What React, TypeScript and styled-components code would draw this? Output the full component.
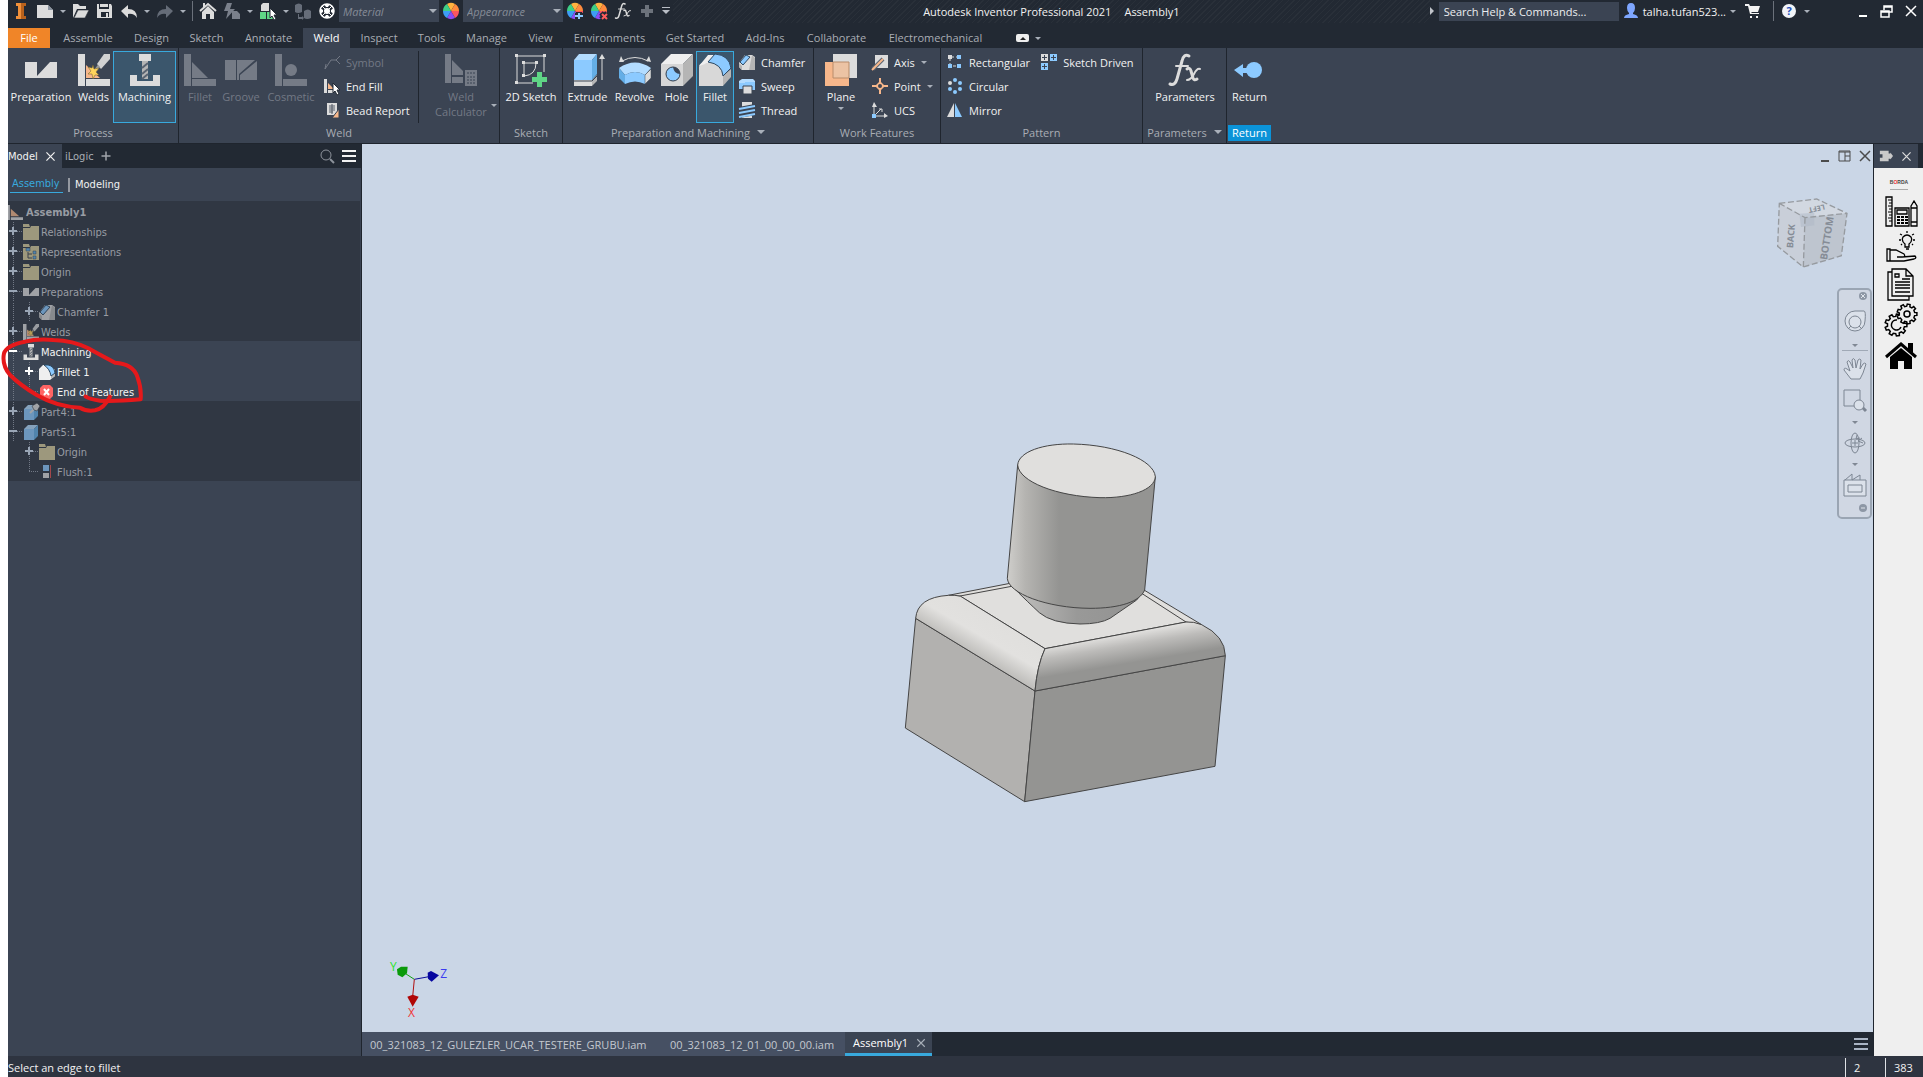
import React from 'react';
import styled, { createGlobalStyle, css } from 'styled-components';

const ui = '"Open Sans", "Noto Sans", sans-serif';
const tahoma = '"DejaVu Sans Condensed", "DejaVu Sans", sans-serif';
const c = {
  dark: '#222933', panel: '#3b4453', tree: '#303743', line: '#1f252e', text: '#f2f2f2',
  muted: '#a9adb4', off: '#737985', accent: '#38a9dd', L: '#dcdcdc', D: '#b5b5b5',
  B: '#8ccaff', B2: '#64aee6', B3: '#b3dcff', O: '#f7b78b', G: '#5fd586', view: '#cad6e6',
};

const Global = createGlobalStyle`
  *{box-sizing:border-box}
  body{margin:0;background:#fff;font:11px ${ui};color:${c.text}}
  button{font:inherit;color:inherit;background:none;border:0;padding:0;margin:0}
  button,a{cursor:pointer}
  ul{margin:0;padding:0;list-style:none}
  svg{display:block;flex:none}
`;

/* ---------- glyphs ---------- */
const folder = <path fill="#d8cc9c" d="M0 0h6l1 3H0z M0 4h7l1-2h8v14H0z" />;
const chamfer = (
  <>
    <path fill={c.L} d="M0 9l6-8h7l3 2v13H3L0 13z" />
    <path fill={c.D} d="M0 9l3 3v4L0 13z M13 1l3 3v12h-6z" />
    <path fill={c.B} stroke="#2f4a63" d="M1 8l6-7 4 2-7 8z" />
  </>
);
const fillet16 = (
  <>
    <path fill="#efefef" d="M0 15V5l4-4h6l6 5v6l-5 4H0z" />
    <path fill={c.D} d="M12 9l4-4v7l-4 3z" />
    <path fill={c.B} stroke="#2f4a63" d="M5 1h4q6 1 7 8l-4 3Q11 5 5 1z" />
  </>
);
const wheel = (
  <>
    <path fill="#ffb23f" d="M8 8L4 1a8 8 0 0 1 8 0z" />
    <path fill="#ff8b3d" d="M8 8l4-7a8 8 0 0 1 4 7z" />
    <path fill="#fb5660" d="M8 8h8a8 8 0 0 1-4 7z" />
    <path fill="#8a4cf5" d="M8 8l4 7a8 8 0 0 1-8 0z" />
    <path fill="#3d9df5" d="M8 8l-4 7a8 8 0 0 1-4-7z" />
    <path fill="#3ecf86" d="M8 8H0a8 8 0 0 1 4-7z" />
  </>
);
const fx = (
  <g fill="none" stroke={c.L} strokeLinecap="round">
    <path strokeWidth="3" d="M20 2q-5-3-7 5L8 25q-2 7-7 5" />
    <path strokeWidth="2" d="M7 12h12" />
    <path strokeWidth="3" d="M18 15q3-2 4 2l2 7q1 3 4 1" />
    <path strokeWidth="2" d="M31 15q-3-1-6 5t-7 6" />
  </g>
);
const drill = (
  <>
    <path fill={c.L} d="M10 0h12v7H10z M1 21h7v6h16v-6h7v11H1z" />
    <path fill={c.D} d="M13 7h6v18h-6z" />
    <path stroke="#5a6472" strokeWidth="2" d="M13 14l6-5M13 20l6-5M13 25l6-5" />
  </>
);
const welds = (
  <>
    <path fill={c.L} d="M0 0h7v32H0z M8 25h24v7H8z" />
    <path fill={c.O} d="M8 11v13h14z" />
    <path fill="#d2d2d2" d="M26 0h6v5L23 15l-4-5z" />
    <path stroke="#9a9a9a" strokeWidth="3" d="M21 12l-4 5" />
    <path fill="#ffd45c" stroke="#6a5a30" strokeWidth=".5" d="M15 11l1 4 5-1-3 4 3 3-4 0-2 4-1-5-4 0 3-3-3-4 4 1z" />
  </>
);
const prep = <path fill={c.L} d="M0 8h12v14L25 8h7v16H0z" />;
const cubeSmall = (
  <>
    <path fill={c.B} d="M1 5h10v11H1z" />
    <path fill={c.B3} d="M1 5l4-4h10l-4 4z" />
    <path fill={c.B2} d="M11 5l4-4v11l-4 4z" />
  </>
);
const arrowCursor = <path fill="#fff" stroke={c.dark} strokeWidth="1" d="M9 5v10l2-2 2 4 2-1-2-4h3z" />;

const big: Record<string, React.ReactNode> = {
  prep, welds, drill, fx,
  filletWeld: <path d="M0 0h7v32H0z M8 25h24v7H8z M8 8v16h16z" />,
  groove: <><path d="M0 6h11v20H0z M12 6h18L14 20v6h-2z M32 7v19H15v-5z" /></>,
  cosmetic: <><path d="M0 0h7v32H0z M8 25h24v7H8z" /><circle cx="16" cy="16" r="6" /></>,
  calc: <><path d="M0 0h6v29H0z M7 23h11v6H7z M7 6v15h11v-4z" /><path d="M20 16h12v16H20z" /><path stroke={c.panel} strokeWidth="1" strokeDasharray="2 1" d="M22 19h8M22 23h8M22 26h8M22 29h8" /></>,
  sketch: (
    <>
      <g fill="none" stroke={c.L}><path d="M2 2h27v16M2 2v27h16M9 9h12M9 9v12M21 9q0 12-12 13" /></g>
      <path fill={c.L} d="M0 0h3v3H0z M28 0h3v3h-3z M0 27h3v3H0z M7 7h3v3H7z M20 7h3v3h-3z M7 20h3v3H7z" />
      <path fill={c.G} d="M22 18h5v5h5v5h-5v5h-5v-5h-5v-5h5z" />
    </>
  ),
  extrude: (
    <>
      <path fill={c.L} d="M2 26h18v6H2z" /><path fill={c.D} d="M20 26l5-5v6l-5 5z" />
      <path fill={c.B} d="M2 6h18v20H2z" /><path fill={c.B3} d="M2 6l5-6h18l-5 6z" /><path fill={c.B2} d="M20 6l5-6v20l-5 6z" />
      <path stroke={c.panel} d="M2 27h18l5-5" fill="none" />
      <path stroke={c.L} d="M30 4v22" /><path fill={c.L} d="M27 5l3-5 3 5z" />
    </>
  ),
  revolve: (
    <>
      <path fill="none" stroke={c.L} d="M3 7Q16 0 29 7" /><path fill={c.L} d="M0 8l2-6 3 6z M32 8l-2-6-3 5z" />
      <path fill={c.B3} d="M0 14Q16 3 32 14l-6 7Q16 15 6 21z" />
      <path fill={c.B2} d="M0 14l6 7v9l-6-6z" />
      <path fill={c.B} d="M6 21Q16 15 26 21v9q-10-5-20 0z" />
      <path fill={c.L} stroke={c.panel} strokeWidth=".5" d="M26 21l6-6v9l-6 6z" />
    </>
  ),
  hole: (
    <>
      <path fill="#d6d6d6" d="M0 10h22v22H0z" /><path fill="#efefef" d="M0 10L10 0h22L22 10z" /><path fill={c.D} d="M22 10L32 0v22L22 32z" />
      <circle cx="12" cy="20" r="7" fill={c.B} stroke="#333c4a" /><path fill={c.panel} d="M12 13a7 7 0 0 1 7 7q-6 0-7-7z" />
    </>
  ),
  fillet: (
    <>
      <path fill="#d8d8d8" d="M0 32V13Q0 8 9 8q13 1 15 13v11z" /><path fill="#efefef" d="M0 12L9 1h6L6 10z M9 1h8L9 9H3z" />
      <path fill={c.D} d="M24 22l8-7v8l-8 9z" />
      <path fill={c.B} stroke="#2f4a63" d="M9 8l7-8q14 1 16 14l-8 8Q23 10 9 8z" />
    </>
  ),
  plane: (
    <>
      <path fill={c.L} d="M8 0h24v24H8z" /><path fill={c.O} d="M0 8h24v24H0z" /><path fill="#ecc3a4" stroke="#b98c6b" d="M8 8h16v16H8z" />
    </>
  ),
  ret: <><circle cx="20" cy="16" r="8" fill={c.B} /><path fill={c.B} d="M0 16l9-6v4h5v5H9v4z" /></>,
};

const small: Record<string, React.ReactNode> = {
  chamfer, folder, fillet: fillet16, wheel, cube: cubeSmall,
  logo: <><path fill="#f0903a" d="M3 0h10v3h-2v10h2v3H3v-3h2V3H3z" /><path fill="#b9621c" d="M8 0h5v3h-2v10h2v3H8z" /></>,
  doc: <><path fill={c.L} d="M0 2h11l5 5v8H0z" /><path fill="#8a93a0" d="M11 2l5 5h-5z" /></>,
  open: <><path fill={c.L} d="M0 15V1h5l2 2h6v3H4z" /><path fill={c.L} stroke={c.dark} strokeWidth=".6" d="M5 7h11l-4 8H1z" /></>,
  save: <><path fill={c.L} d="M0 1h2v5h10V1h2l1 2v12H0z" /><path fill={c.L} d="M3 1h8v3H3z" /><path fill={c.dark} d="M4 9h8v5H4z" /><path fill={c.L} d="M9 10h2v4H9z" /></>,
  undo: <path fill={c.L} d="M0 8l7-6v4q9 0 9 9-3-5-9-4v4z" />,
  redo: <path fill="#656c78" d="M16 8L9 2v4q-9 0-9 9 3-5 9-4v4z" />,
  home: <><path fill={c.L} d="M2 9l6-6 6 6v7h-4v-5H6v5H2z" /><path fill="none" stroke={c.L} strokeWidth="2" d="M0 8l8-7 8 7" /><path fill={c.L} d="M3 0h2v4H3z" /></>,
  bolt: <path fill="#7a808b" d="M3 0h5L6 6h5l-9 10 2-8H0z M8 8h5l3 3v5H8z" />,
  asm: <><path fill={c.L} d="M1 2l2-2h6v8H1z" /><path fill={c.G} d="M0 9h6v7H0z M7 9h6v7H7z" /><g transform="translate(1 0)">{arrowCursor}</g></>,
  parts: <path fill="#666d79" d="M0 2q4-3 7 0v7q-4 2-7 0z M9 8q4-3 7 0v7q-4 2-7 0z M3 11h1v3h3v-1l2 2-2 2v-1H3z" />,
  globe: <><circle cx="8" cy="8" r="7" fill={c.dark} stroke="#fff" strokeWidth="1.500" /><g fill="#fff"><circle cx="8" cy="8" r="3" /><path d="M5 1h6L9 4H7z M5 15h6l-2-3H7z M1 5v6l3-2V7z M15 5v6l-3-2V7z" /></g><path fill="none" stroke="#fff" d="M3 3l4 4M13 3L9 7M3 13l4-4M13 13L9 9" /></>,
  wheelAdd: <>{wheel}<path stroke={c.dark} strokeWidth="6" d="M12 9v7M8 13h8" /><path stroke={c.B} strokeWidth="2" d="M12 10v6M8 13h8" /></>,
  wheelDel: <>{wheel}<path stroke={c.dark} strokeWidth="5" d="M10 10l6 6M16 10l-6 6" /><path stroke="#ff5d5d" strokeWidth="2" d="M11 11l5 5M16 11l-5 5" /></>,
  plus: <path fill="#6c727b" d="M6 2h4v4h4v4h-4v4H6v-4H2V6h4z" />,
  symbol: <path fill="none" stroke={c.off} strokeWidth="1" d="M1 15l1-5M1 15l6-9h5l4-4M12 6l4 4" />,
  endFill: <><path fill={c.L} d="M0 1h3v14H0z M4 12h5v3H4z" /><path fill={c.O} d="M4 5v6h6z" />{arrowCursor}</>,
  bead: <><path fill={c.L} d="M3 1h10v12H3z" /><path stroke="#555d69" d="M5 4h6M5 6h6M5 8h6M5 10h4M8 2v10" /><path fill={c.O} stroke={c.panel} d="M8 16h7V7z" /></>,
  sweep: <><path fill={c.B3} d="M0 3l3-2h11l2 2v3H0z" /><path fill={c.B} d="M0 5h6v6H0z M6 4h10v8h-3V8H6z" /><path fill={c.L} stroke={c.panel} d="M4 8h9v8H4z" /></>,
  thread: <><path fill={c.L} d="M3 0h10v16H3z" /><path stroke={c.panel} strokeWidth="4" d="M0 7l16-3M0 11l16-3M0 14l16-3" /><path stroke={c.B} strokeWidth="2" d="M0 7l16-3M0 11l16-3M0 15l16-3" /></>,
  axis: <><path fill={c.L} d="M3 1h13v13H3z" /><path stroke="#5a6472" strokeWidth="4" d="M1 15L11 5" /><path stroke={c.O} strokeWidth="2" d="M0 16L11 5" /></>,
  point: <><path fill={c.O} d="M7 0h2v16H7z M0 7h16v2H0z M8 3l5 5-5 5-5-5z" /><circle cx="8" cy="8" r="2" fill={c.panel} /></>,
  ucs: <><path fill="none" stroke={c.L} d="M2 14V3M2 14h12M2 14l7-7M7 7h3v3" /><path fill={c.L} d="M0 5l2-5 3 5z M12 11l4 3-4 2z" /><path fill={c.B} d="M0 12h4v4H0z" /></>,
  rect: <><path fill="none" stroke={c.L} strokeDasharray="3 2" d="M3 4v9M4 3h9" /><path fill={c.L} d="M1 1h4v4H1z" /><path fill={c.B} d="M10 1h4v4h-4z M1 10h4v4H1z M10 10h4v4h-4z" /><path stroke={c.L} d="M6 12h3" /></>,
  circ: <><circle cx="3" cy="5" r="2" fill={c.L} />{[[8, 2], [13, 5], [13, 11], [8, 14], [3, 11]].map(([x, y]) => <circle key={`${x}-${y}`} cx={x} cy={y} r="2" fill={c.B} />)}</>,
  mirror: <><path fill={c.L} d="M7 1v14H0z" /><path fill={c.B} d="M8 1v14h7z" /></>,
  driven: <><path fill={c.L} d="M0 0h7v7H0z" /><path fill={c.B} d="M9 0h7v7H9z M0 9h7v7H0z" /><path stroke={c.panel} d="M1 3.500h5M3.500 1v5M10 3.500h5M12.500 1v5M1 12.500h5M3.500 10v5" /></>,
  weldment: <><path fill={c.L} d="M0 0h2v16H0z M3 13h13v3H3z" /><path fill={c.O} d="M3 4v8h9z" /></>,
  reps: <>{folder}<path fill={c.B2} stroke="#3b4453" strokeWidth=".5" d="M3 4h4v3H3z M10 7h3v3h-3z M10 12h3v3h-3z" /><path fill="none" stroke="#3b4453" d="M5 8v6h4M5 10h4" /></>,
  cubePin: <>{cubeSmall}<path stroke={c.L} strokeWidth="2" d="M7 9l4-4" /><path fill={c.L} stroke={c.tree} strokeWidth=".6" d="M9 2l5-3 3 3-3 5-3-1z" /></>,
  end: <><path fill="#ff6464" d="M4 1h7l3 3v8l-3 3H4l-3-3V4z" /><path stroke="#fff" strokeWidth="2" d="M5 5l5 6M10 5l-5 6" /></>,
  flush: <><path fill={c.B} d="M4 1h6v6H4z" /><path fill={c.L} d="M4 9h6v5H4z" /><path stroke="#e05050" d="M11.500 1v13" /></>,
  user: <path fill="#7ea6ff" d="M8 0q4 0 4 5 0 3-2 5v1q5 1 5 4H1q0-3 5-4v-1Q4 8 4 5q0-5 4-5z" />,
  cart: <><path fill="#f2f2f2" d="M0 1h4l1 2h10l-2 6H6l1 1h7v1H5L3 3H0z" /><path fill="#f2f2f2" d="M5 13h2v2H5z M11 13h2v2h-2z" /></>,
  search: <><circle cx="7" cy="7" r="5" fill="none" stroke="#8d929b" strokeWidth="1" /><path stroke="#8d929b" strokeWidth="2" d="M11 11l4 4" /></>,
  menu: <path stroke="currentColor" strokeWidth="2" d="M1 3h14M1 8h14M1 13h14" />,
  min: <path stroke="currentColor" strokeWidth="2" d="M4 13h8" />,
  restore: <path fill="none" stroke="currentColor" strokeWidth="1.500" d="M2 8h8v6H2z M2 9h8M5 7V3h8v6h-3M5 4h8" />,
  tile: <path fill="none" stroke="currentColor" d="M2 3h11v10H2z M2 4h11M8 4v9M8 8h5" />,
  close: <path stroke="currentColor" strokeWidth="1.500" d="M3 3l10 10M13 3L3 13" />,
  add: <path stroke="#a0a4ab" strokeWidth="2" d="M8 2v12M2 8h12" />,
  addin: <path fill="#c9c9c9" d="M1 2h10v3h2v-1l3 4-3 4v-1h-2v3H1v-4h3V6H1z" />,
};

const Svg = styled.svg<{ $s: number }>`width:${p => p.$s}px;height:${p => p.$s}px;overflow:visible`;
const Icon = ({ n, s = 16 }: { n: string; s?: number }) => {
  const large = s === 32 || !small[n];
  return <Svg $s={s} viewBox={large ? '0 0 32 32' : '0 0 16 16'} aria-hidden>{large ? big[n] : small[n]}</Svg>;
};
const Caret = styled.i<{ $w?: number }>`
  display:block;flex:none;width:0;height:0;border:solid transparent;border-top-color:#a9b0ba;
  border-width:${p => p.$w ?? 3}px ${p => p.$w ?? 3}px 0;
`;

/* ---------- frame ---------- */
const Shell = styled.div`
  position:relative;display:grid;grid-template-rows:28px 20px 96px minmax(0,1fr) 21px;
  height:100vh;padding-left:8px;overflow:hidden;background:#fff;
`;
const TitleBar = styled.header`display:flex;background:${c.dark};padding-bottom:6px;min-width:0`;
const Tools = styled.div`display:flex;align-items:center;flex:none`;
const Tool = styled.button<{ $w?: number }>`display:flex;align-items:center;justify-content:center;width:${p => p.$w ?? 24}px;height:22px;flex:none`;
const WindowTools = styled(Tools)`padding-left:38px;color:#fff`;
const Rule = styled.span`width:1px;height:20px;margin:0 3px;background:#6b717b;flex:none`;
const Combo = styled.label`display:flex;align-items:center;width:100px;height:22px;padding-right:2px;background:${c.panel}`;
const Select = styled.select`
  appearance:none;flex:1;min-width:0;height:22px;border:0;padding:0 4px;background:transparent;
  color:#858b96;font:italic 11px ${ui};outline:0;
`;
const Caption = styled.h1`
  display:flex;align-items:center;justify-content:center;gap:13px;flex:1;margin:0;height:23px;font-size:11px;font-weight:400;white-space:nowrap;
  background:repeating-linear-gradient(135deg,transparent 0 3px,rgba(255,255,255,.03) 3px 4px);
`;
const Search = styled.input`
  width:180px;height:19px;border:0;padding:0 5px;background:${c.panel};color:#fff;font:11px ${ui};outline:0;
  &::placeholder{color:#eceef0;opacity:1}
`;
const User = styled.button`display:flex;align-items:center;gap:4px;height:22px;padding-left:4px`;
const Help = styled.span`
  display:grid;place-items:center;width:14px;height:14px;border-radius:50%;background:#f2f4f8;color:#2450b8;font-weight:700;font-size:11px;line-height:14px;
`;
const Right = styled.i`width:0;height:0;border:4px solid transparent;border-left-color:#c0c4ca;border-right-width:0;margin-right:5px`;

const TabBar = styled.nav`display:flex;background:${c.dark};min-width:0;line-height:16px`;
const FileTab = styled.button`width:42px;background:#f08528;color:#fff;margin-right:2px`;
const Tab = styled.button<{ $w: number; $on?: boolean }>`
  flex:none;width:${p => p.$w}px;color:${p => (p.$on ? '#fff' : c.muted)};background:${p => (p.$on ? c.panel : 'transparent')};white-space:nowrap;
`;
const Collapse = styled.button`display:flex;align-items:center;gap:6px;margin-left:22px`;
const Pill = styled.span`
  display:grid;place-items:center;width:13px;height:8px;border-radius:2px;background:#eee;
  &::after{content:'';border:3px solid transparent;border-top-width:0;border-bottom-color:#222}
`;

/* ---------- ribbon ---------- */
const Ribbon = styled.section`display:flex;background:${c.panel};border-bottom:1px solid ${c.line};min-width:0`;
const Group = styled.div<{ $w: number; $last?: boolean }>`
  display:flex;flex-direction:column;flex:none;width:${p => p.$w}px;padding-top:3px;
  ${p => !p.$last && css`border-right:1px solid ${c.line};`}
`;
const GroupBody = styled.div`display:flex;height:72px`;
const GroupName = styled.div<{ $hot?: boolean }>`
  display:flex;align-items:center;justify-content:center;gap:7px;height:16px;margin:2px 1px 0;padding-bottom:2px;color:${p => (p.$hot ? '#fff' : c.muted)};
  ${p => p.$hot && css`background:#0b93d8;width:43px;`}
`;
const BigBtn = styled.button<{ $w: number; $on?: boolean }>`
  display:flex;flex-direction:column;align-items:center;flex:none;width:${p => p.$w}px;height:72px;padding-top:${p => (p.$on ? 2 : 3)}px;line-height:15px;white-space:nowrap;
  ${p => p.$on && css`background:#3b566c;border:1px solid ${c.accent};`}
  svg{margin-bottom:3px;fill:#757b86}
  &:disabled{color:${c.off}}
`;
const DropRow = styled.span`display:flex;align-items:center;height:8px`;
const SideDrop = styled.button`display:flex;align-items:flex-end;width:8px;height:56px`;
const Col = styled.div<{ $l?: number }>`display:flex;flex-direction:column;padding-left:${p => p.$l ?? 5}px`;
const SmallBtn = styled.button`
  display:flex;align-items:center;gap:6px;height:24px;padding-bottom:2px;white-space:nowrap;
  &:disabled{color:${c.off}}
`;
const Divider = styled.span`width:1px;background:${c.line};margin:0 12px 0 auto`;
const Big = ({ n, w, t, on, off }: { n: string; w: number; t: string; on?: boolean; off?: boolean }) => (
  <BigBtn $w={w} $on={on} disabled={off}><Icon n={n} s={32} />{t}</BigBtn>
);
const Small = ({ n, t, drop, off }: { n: string; t: string; drop?: boolean; off?: boolean }) => (
  <SmallBtn disabled={off}><Icon n={n} />{t}{drop && <Caret />}</SmallBtn>
);

/* ---------- workspace ---------- */
const Main = styled.main`display:grid;grid-template-columns:354px minmax(0,1fr) 49px;min-height:0`;
const Browser = styled.aside`display:flex;flex-direction:column;background:${c.panel};border-right:1px solid ${c.line};font:11px ${tahoma};min-height:0`;
const BrowserTabs = styled.div`display:flex;align-items:center;height:24px;background:${c.dark};padding-right:2px`;
const BrowserTab = styled.button<{ $on?: boolean }>`
  display:flex;align-items:center;gap:6px;height:24px;
  ${p => (p.$on ? css`width:54px;background:${c.panel};` : css`padding-left:3px;color:${c.muted};`)}
`;
const Spacer = styled.span`flex:1`;
const Modes = styled.div`display:flex;align-items:center;height:33px;padding-left:2px`;
const Mode = styled.button<{ $on?: boolean }>`
  height:16px;line-height:14px;text-align:left;
  ${p => (p.$on ? css`width:53px;padding-left:2px;color:${c.accent};border-bottom:1px solid ${c.accent};` : css`margin-left:5px;padding-left:5px;border-left:2px solid #9599a1;height:14px;`)}
`;
const Tree = styled.ul`background:${c.tree};margin-right:1px`;
const Row = styled.li<{ $lit?: boolean; $lvl: number }>`
  display:flex;align-items:center;height:20px;padding-top:2px;padding-left:${p => (p.$lvl < 0 ? 0 : p.$lvl * 16)}px;
  color:${p => (p.$lit ? '#f4f4f4' : '#989ca3')};background:${p => (p.$lit ? c.panel : 'transparent')};
  font-weight:${p => (p.$lvl < 0 ? 700 : 400)};
  > svg{opacity:${p => (p.$lit ? 1 : 0.65)};margin-right:${p => (p.$lvl < 0 ? 3 : 2)}px}
`;
const Twist = styled.button<{ $k: string; $lit?: boolean }>`
  width:15px;height:20px;flex:none;
  background:
    linear-gradient(${p => (p.$lit ? '#fff' : '#9aa6b6')} 0 0) 1px 8px/8px ${p => (p.$k === 'none' ? 0 : 2)}px no-repeat,
    linear-gradient(${p => (p.$lit ? '#fff' : '#9aa6b6')} 0 0) 4px 5px/2px ${p => (p.$k === 'plus' ? 8 : 0)}px no-repeat,
    repeating-linear-gradient(90deg,#717885 0 1px,transparent 1px 2px) 5px 9px/9px 1px no-repeat,
    repeating-linear-gradient(#717885 0 1px,transparent 1px 2px) 5px 0/1px ${p => (p.$k === 'none' ? 10 : 20)}px no-repeat;
`;
const Guide = styled.span`
  align-self:stretch;width:16px;margin-left:-16px;
  background:repeating-linear-gradient(#717885 0 1px,transparent 1px 2px) 5px 0/1px 20px no-repeat;
`;

const Center = styled.section`display:flex;flex-direction:column;min-width:0;border-right:1px solid ${c.line}`;
const View = styled.div`position:relative;flex:1;min-height:0;background:${c.view};overflow:hidden`;
const WinBtns = styled.div`display:flex;justify-content:flex-end;gap:4px;height:24px;align-items:center;color:#4b4b4b`;
const Model = styled.svg`position:absolute;left:calc(50% - 238px);top:calc(50% - 168px);width:370px;height:400px`;
const Cube = styled.svg`position:absolute;right:8px;top:41px;width:100px;height:90px;font:700 24px ${ui}`;
const Triad = styled.svg`position:absolute;left:21px;bottom:10px;width:69px;height:67px;font:36px ${ui}`;
const NavBar = styled.div`
  position:absolute;right:1px;top:144px;display:flex;flex-direction:column;align-items:center;width:35px;
  border:2px solid #9aa5b3;border-radius:5px;background:#d0d7e3;
`;
const NavBtn = styled.button<{ $h: number; $end?: boolean }>`
  display:flex;align-items:center;justify-content:center;height:${p => p.$h}px;
  ${p => p.$end && css`align-self:flex-end;padding-right:3px;`}
  i{border-top-color:#808894}
`;
const NavRule = styled.span`width:26px;height:1px;background:#a0a9b6`;

const Docs = styled.div`display:flex;height:24px;background:${c.dark}`;
const DocTab = styled.button<{ $w: number; $on?: boolean }>`
  display:flex;align-items:center;flex:none;height:24px;padding:0 8px;white-space:nowrap;color:#c3c8cf;background:#465063;width:${p => p.$w}px;
  ${p => p.$on && css`justify-content:space-between;padding:0 5px 0 8px;color:#fff;background:${c.panel};border-bottom:3px solid ${c.accent};svg{color:#a9b0ba}`}
`;
const MenuBtn = styled.button`margin:0 4px 0 auto;color:#a9b4c4`;

const Side = styled.aside`display:flex;flex-direction:column;background:#efefef;min-height:0`;
const SideHead = styled.div`display:flex;align-items:center;height:24px;border-right:5px solid ${c.dark};background:${c.panel};padding:0 5px;gap:7px;color:#ddd`;
const SideList = styled.div`display:flex;flex-direction:column;align-items:center;padding:8px 0 0 5px;color:#000`;
const Brand = styled.div`
  height:13px;margin:1px 4px 4px 0;font:700 5px/10px "Liberation Sans",sans-serif;color:#444;border-bottom:1px solid #aaa;
  b{color:#e33}
`;
const SideBtn = styled.button`display:grid;place-items:center;width:34px;height:36px`;

const Status = styled.footer`display:flex;align-items:stretch;background:#2e3440;min-width:0;line-height:23px`;
const Hint = styled.span`flex:1`;
const Cell = styled.span<{ $w: number }>`width:${p => p.$w}px;border-left:1px solid #dfe2e6;margin-top:2px;padding-left:8px;line-height:19px`;
const Scribble = styled.svg`position:absolute;left:0;top:330px;width:150px;height:90px;pointer-events:none;overflow:visible`;

const tabs: [string, number][] = [['Assemble', 72], ['Design', 55], ['Sketch', 55], ['Annotate', 69], ['Weld', 47], ['Inspect', 58], ['Tools', 47], ['Manage', 63], ['View', 45], ['Environments', 93], ['Get Started', 78], ['Add-Ins', 62], ['Collaborate', 81], ['Electromechanical', 117]];
const tree: { t: string; n: string; lvl: number; k?: string; lit?: boolean; guide?: boolean }[] = [
  { t: 'Assembly1', n: 'weldment', lvl: -1 },
  { t: 'Relationships', n: 'folder', lvl: 0, k: 'plus' },
  { t: 'Representations', n: 'reps', lvl: 0, k: 'plus' },
  { t: 'Origin', n: 'folder', lvl: 0, k: 'plus' },
  { t: 'Preparations', n: 'prep', lvl: 0, k: 'minus' },
  { t: 'Chamfer 1', n: 'chamfer', lvl: 1, k: 'plus', guide: true },
  { t: 'Welds', n: 'welds', lvl: 0, k: 'plus' },
  { t: 'Machining', n: 'drill', lvl: 0, k: 'minus', lit: true },
  { t: 'Fillet 1', n: 'fillet', lvl: 1, k: 'plus', lit: true, guide: true },
  { t: 'End of Features', n: 'end', lvl: 1, k: 'none', lit: true, guide: true },
  { t: 'Part4:1', n: 'cubePin', lvl: 0, k: 'plus' },
  { t: 'Part5:1', n: 'cube', lvl: 0, k: 'minus' },
  { t: 'Origin', n: 'folder', lvl: 1, k: 'plus' },
  { t: 'Flush:1', n: 'flush', lvl: 1, k: 'none' },
];
const teeth = (cx: number, cy: number, r: number, n: number) => {
  const pts: string[] = [];
  for (let i = 0; i < n; i++) {
    [[-0.30, 0.78], [-0.20, 1], [0.20, 1], [0.30, 0.78]].forEach(([o, k]) => {
      const a = ((i + o) / n) * 2 * Math.PI;
      pts.push(`${(cx + r * k * Math.cos(a)).toFixed(1)} ${(cy + r * k * Math.sin(a)).toFixed(1)}`);
    });
  }
  return `M${pts.join('L')}z`;
};

const ModelDrawing = () => (
  <Model viewBox="0 0 1110 1200" aria-label="Model">
    <defs>
      <linearGradient id="cyl"><stop offset="0" stopColor="#cfcecb" /><stop offset="0.120" stopColor="#b5b4b1" /><stop offset="0.350" stopColor="#949492" /><stop offset="1" stopColor="#949492" /></linearGradient>
      <linearGradient id="cone"><stop offset="0" stopColor="#c4c3c1" /><stop offset="0.500" stopColor="#999998" /><stop offset="1" stopColor="#929291" /></linearGradient>
      <linearGradient id="front" gradientUnits="userSpaceOnUse" x1="700" y1="645" x2="715" y2="735"><stop offset="0" stopColor="#e2e1df" /><stop offset="0.400" stopColor="#bdbcba" /><stop offset="1" stopColor="#949492" /></linearGradient>
      <linearGradient id="left" gradientUnits="userSpaceOnUse" x1="360" y1="600" x2="290" y2="720"><stop offset="0" stopColor="#e0dfdd" /><stop offset="0.500" stopColor="#e2e1df" /><stop offset="1" stopColor="#b8b7b4" /></linearGradient>
    </defs>
    <g stroke="#454545" strokeWidth="3" strokeLinejoin="round">
      <path fill="#e0dfdd" d="M205 526L390 490L792 510L965 614L918 606L495 686L240 528z" />
      <path fill="none" d="M240 528L400 498M785 520L918 606" />
      <path fill="#b2b1af" d="M107 595L465 813L434 1145L76 924z" />
      <path fill="#949492" d="M465 813L1036 707L1005 1039L434 1145z" />
      <path fill="url(#left)" d="M107 595Q112 532 205 526Q225 524 242 529L495 686Q472 735 465 813z" />
      <path fill="url(#front)" d="M495 686L918 606Q940 604 965 614Q1035 648 1036 707L465 813Q472 735 495 686z" />
      <path fill="url(#cone)" d="M390 490Q400 505 478 578Q515 610 600 612Q660 612 690 595L770 540L792 510z" />
      <path fill="url(#cyl)" d="M413 135L382 475C385 520 500 564 630 565C720 565 780 545 794 510L826 170z" />
      <path fill="#e0dfdd" d="M413 135C416 95 490 70 580 72C710 75 822 120 826 170C824 210 750 235 660 233C530 229 417 185 413 135z" />
    </g>
  </Model>
);

const CubeDrawing = () => (
  <Cube viewBox="0 0 300 270" aria-label="View cube">
    <path fill="#d2d8e1" d="M43 55L155 42L246 85L120 98z" />
    <path fill="#c9cfd9" d="M43 55L120 98L115 246L38 184z" />
    <path fill="#bec5cf" d="M120 98L246 85L229 212L115 246z" />
    <path fill="#aeb7c6" opacity="0.500" d="M103 86l45-3v38l-40 5z" />
    <path fill="none" stroke="#969a9f" strokeWidth="4" strokeDasharray="18 8" d="M43 55L155 42L246 85L229 212L115 246L38 184z M43 55L120 98L246 85M120 98L115 246" />
    <text fill="#858c96" transform="translate(84 190) rotate(-85)" fontSize="27">BACK</text>
    <text fill="#858c96" transform="translate(186 226) rotate(-81)" fontSize="30">BOTTOM</text>
    <text fill="#858c96" transform="translate(178 58) rotate(168)" fontSize="22">LEFT</text>
  </Cube>
);

const TriadDrawing = () => (
  <Triad viewBox="69 45 207 201" aria-label="Axes">
    <g strokeWidth="3"><path stroke="#12a012" d="M163 118L132 98" /><path stroke="#0c0c9c" d="M163 118L207 110" /><path stroke="#b01010" d="M163 118L158 170" /></g>
    <path fill="#0a9a0a" d="M111 88l12-8h20l-2 20-14 12-14-8z" />
    <path fill="#0606a0" d="M203 98l10-5 24 13-22 19-11-9z" />
    <path fill="#b00606" d="M142 170l16-6 18 6-18 30z" />
    <text x="90" y="93" fill="#2be52b">Y</text><text x="241" y="114" fill="#3b3bf0">Z</text><text x="144" y="231" fill="#f03535">X</text>
  </Triad>
);

const nav = { fill: '#dbe1ea', stroke: '#7d8693' };
const Ring = ({ d }: { d: string }) => <Svg $s={8} viewBox="0 0 8 8"><circle cx="4" cy="4" r="4" fill="#8d97a5" /><path stroke="#dfe4eb" fill="none" d={d} /></Svg>;

export default function App() {
  return (
    <Shell>
      <Global />
      <TitleBar>
        <Tools>
          <Tool $w={25} aria-label="Inventor"><Icon n="logo" /></Tool>
          <Tool aria-label="New"><Icon n="doc" /></Tool><Tool $w={12} aria-label="New options"><Caret /></Tool>
          <Tool aria-label="Open"><Icon n="open" /></Tool>
          <Tool aria-label="Save"><Icon n="save" /></Tool>
          <Tool aria-label="Undo"><Icon n="undo" /></Tool><Tool $w={12} aria-label="Undo list"><Caret /></Tool>
          <Tool aria-label="Redo"><Icon n="redo" /></Tool><Tool $w={12} aria-label="Redo list"><Caret /></Tool>
          <Rule />
          <Tool aria-label="Home"><Icon n="home" /></Tool>
          <Tool aria-label="Update"><Icon n="bolt" /></Tool><Tool $w={12} aria-label="Update options"><Caret /></Tool>
          <Tool aria-label="Select"><Icon n="asm" /></Tool><Tool $w={11} aria-label="Select options"><Caret /></Tool>
          <Tool aria-label="Components"><Icon n="parts" /></Tool>
          <Tool aria-label="Material browser"><Icon n="globe" /></Tool>
          <Combo><Select aria-label="Material"><option>Material</option></Select><Caret $w={4} /></Combo>
          <Tool aria-label="Appearance browser"><Icon n="wheel" /></Tool>
          <Combo><Select aria-label="Appearance"><option>Appearance</option></Select><Caret $w={4} /></Combo>
          <Tool aria-label="Adjust"><Icon n="wheelAdd" /></Tool>
          <Tool aria-label="Clear"><Icon n="wheelDel" /></Tool>
          <Tool aria-label="Parameters"><Icon n="fx" /></Tool>
          <Tool aria-label="Measure"><Icon n="plus" /></Tool>
          <Tool $w={14} aria-label="Customize"><Svg $s={8} viewBox="0 0 8 8"><path fill="#b9bec6" d="M0 0h8v1H0z M0 3h8L4 7z" /></Svg></Tool>
        </Tools>
        <Caption><span>Autodesk Inventor Professional 2021</span><span>Assembly1</span></Caption>
        <Tools>
          <Right />
          <Search aria-label="Search" placeholder="Search Help & Commands..." />
          <User><Icon n="user" /><span>talha.tufan523...</span><Caret /></User>
          <Tool $w={34} aria-label="App store"><Icon n="cart" /></Tool>
          <Rule />
          <Tool aria-label="Help"><Help>?</Help></Tool><Tool $w={12} aria-label="Help options"><Caret /></Tool>
        </Tools>
        <WindowTools>
          <Tool aria-label="Minimize"><Icon n="min" /></Tool>
          <Tool aria-label="Restore"><Icon n="restore" /></Tool>
          <Tool aria-label="Close"><Icon n="close" /></Tool>
        </WindowTools>
      </TitleBar>

      <TabBar>
        <FileTab>File</FileTab>
        {tabs.map(([t, w]) => <Tab key={t} $w={w} $on={t === 'Weld'}>{t}</Tab>)}
        <Collapse aria-label="Collapse ribbon"><Pill /><Caret /></Collapse>
      </TabBar>

      <Ribbon>
        <Group $w={171}>
          <GroupBody><Big n="prep" w={66} t="Preparation" /><Big n="welds" w={39} t="Welds" /><Big n="drill" w={63} t="Machining" on /></GroupBody>
          <GroupName>Process</GroupName>
        </Group>
        <Group $w={321}>
          <GroupBody>
            <Big n="filletWeld" w={42} t="Fillet" off /><Big n="groove" w={40} t="Groove" off /><Big n="cosmetic" w={60} t="Cosmetic" off />
            <Col $l={3}><Small n="symbol" t="Symbol" off /><Small n="endFill" t="End Fill" /><Small n="bead" t="Bead Report" /></Col>
            <Divider />
            <BigBtn $w={60} disabled><Icon n="calc" s={32} />Weld<br />Calculator</BigBtn>
            <SideDrop aria-label="Weld calculator options"><Caret /></SideDrop>
          </GroupBody>
          <GroupName>Weld</GroupName>
        </Group>
        <Group $w={63}>
          <GroupBody><Big n="sketch" w={62} t="2D Sketch" /></GroupBody>
          <GroupName>Sketch</GroupName>
        </Group>
        <Group $w={251}>
          <GroupBody>
            <Big n="extrude" w={49} t="Extrude" /><Big n="revolve" w={45} t="Revolve" /><Big n="hole" w={39} t="Hole" /><Big n="fillet" w={38} t="Fillet" on />
            <Col><Small n="chamfer" t="Chamfer" /><Small n="sweep" t="Sweep" /><Small n="thread" t="Thread" /></Col>
          </GroupBody>
          <GroupName>Preparation and Machining<Caret $w={4} /></GroupName>
        </Group>
        <Group $w={127}>
          <GroupBody>
            <BigBtn $w={54}><Icon n="plane" s={32} />Plane<DropRow><Caret /></DropRow></BigBtn>
            <Col $l={4}><Small n="axis" t="Axis" drop /><Small n="point" t="Point" drop /><Small n="ucs" t="UCS" /></Col>
          </GroupBody>
          <GroupName>Work Features</GroupName>
        </Group>
        <Group $w={202}>
          <GroupBody>
            <Col $l={6}><Small n="rect" t="Rectangular" /><Small n="circ" t="Circular" /><Small n="mirror" t="Mirror" /></Col>
            <Col $l={11}><Small n="driven" t="Sketch Driven" /></Col>
          </GroupBody>
          <GroupName>Pattern</GroupName>
        </Group>
        <Group $w={84}>
          <GroupBody><Big n="fx" w={84} t="Parameters" /></GroupBody>
          <GroupName>Parameters<Caret $w={4} /></GroupName>
        </Group>
        <Group $w={45} $last>
          <GroupBody><Big n="ret" w={45} t="Return" /></GroupBody>
          <GroupName $hot>Return</GroupName>
        </Group>
      </Ribbon>

      <Main>
        <Browser>
          <BrowserTabs>
            <BrowserTab $on>Model<Icon n="close" s={13} /></BrowserTab>
            <BrowserTab>iLogic<Icon n="add" s={12} /></BrowserTab>
            <Spacer />
            <Tool aria-label="Find"><Icon n="search" /></Tool><Tool $w={20} aria-label="Browser menu"><Icon n="menu" /></Tool>
          </BrowserTabs>
          <Modes><Mode $on>Assembly</Mode><Mode>Modeling</Mode></Modes>
          <Tree>
            {tree.map((r, i) => (
              <Row key={i} $lvl={r.lvl} $lit={r.lit}>
                {r.guide && <Guide />}
                {r.k && <Twist $k={r.k} $lit={r.lit} aria-label={`Toggle ${r.t}`} />}
                <Icon n={r.n} s={r.lvl < 0 ? 15 : 16} />{r.t}
              </Row>
            ))}
          </Tree>
        </Browser>

        <Center>
          <View>
            <WinBtns>
              <button aria-label="Minimize document"><Icon n="min" /></button>
              <button aria-label="Tile document"><Icon n="tile" /></button>
              <button aria-label="Close document"><Icon n="close" /></button>
            </WinBtns>
            <ModelDrawing />
            <CubeDrawing />
            <NavBar>
              <NavBtn $h={12} $end aria-label="Close bar"><Ring d="M2 2l4 4M6 2l-4 4" /></NavBtn>
              <NavBtn $h={38} aria-label="Wheel"><Svg $s={22} viewBox="0 0 22 22" {...nav}><path d="M11 1h9q2 0 1 10A10 10 0 1 1 11 1z" /><circle cx="11" cy="12" r="6" /><path d="M4 19l3-3M18 19l-3-3" /></Svg></NavBtn>
              <NavBtn $h={10} aria-label="Wheel options"><Caret /></NavBtn>
              <NavRule />
              <NavBtn $h={36} aria-label="Pan"><Svg $s={24} viewBox="0 0 24 24" {...nav}><path d="M8 22L1 13q0-3 3-1l3 2L4 5q1-3 3 0l3 6-1-8q1-3 3 0l1 8 2-8q2-2 3 0l-1 9 3-5q2-2 3 0l-3 9-3 6z" /></Svg></NavBtn>
              <NavBtn $h={28} aria-label="Zoom"><Svg $s={24} viewBox="0 0 24 24" {...nav}><path fill="none" d="M1 1h16v16H1z" /><path strokeWidth="3" d="M19 18l4 4" /><circle cx="16" cy="16" r="5" /></Svg></NavBtn>
              <NavBtn $h={14} aria-label="Zoom options"><Caret /></NavBtn>
              <NavBtn $h={28} aria-label="Orbit"><Svg $s={22} viewBox="0 0 22 22" {...nav} fill="none"><ellipse cx="11" cy="11" rx="4" ry="10" /><ellipse cx="11" cy="11" rx="10" ry="4" /><path d="M11 8v6M8 11h6M18 6l-4 3 5 2M13 3l-1 4 4-1" /></Svg></NavBtn>
              <NavBtn $h={14} aria-label="Orbit options"><Caret /></NavBtn>
              <NavBtn $h={28} aria-label="Look at"><Svg $s={24} viewBox="0 0 24 24" {...nav}><path d="M1 7h22v16H1z M5 12h14v7H5z" /><path d="M2 7l7-6v6l8-5v5" fill="none" /></Svg></NavBtn>
              <NavBtn $h={18} $end aria-label="Customize bar"><Ring d="M2 4h4" /></NavBtn>
            </NavBar>
            <TriadDrawing />
          </View>
          <Docs>
            <DocTab $w={300}>00_321083_12_GULEZLER_UCAR_TESTERE_GRUBU.iam</DocTab>
            <DocTab $w={183}>00_321083_12_01_00_00_00.iam</DocTab>
            <DocTab $w={87} $on>Assembly1<Icon n="close" s={12} /></DocTab>
            <MenuBtn aria-label="Document list"><Icon n="menu" /></MenuBtn>
          </Docs>
        </Center>

        <Side>
          <SideHead><Icon n="addin" s={14} /><Icon n="close" s={13} /></SideHead>
          <SideList>
            <Brand>B<b>O</b>RDA</Brand>
            <SideBtn aria-label="Calculations"><Svg $s={32} viewBox="0 0 32 32" fill="none" stroke="#000" strokeWidth="1"><path strokeWidth="1.300" d="M1 1h6v29H1z M10 12h14v18H10z M12 14h10v4H12z M26 10l3-5 3 5v20h-6z M26 12h6M26 26h6" /><path d="M3 4h4M4 7h3M3 10h4M4 13h3M3 16h4M4 19h3M3 22h4M4 25h3" /><path strokeWidth="2" strokeDasharray="3 1" d="M12 21h11M12 24h11M12 27h11" /></Svg></SideBtn>
            <SideBtn aria-label="Ideas"><Svg $s={32} viewBox="0 0 32 32" fill="none" stroke="#000" strokeWidth="1.300"><path d="M2 17h3v12H2z M5 18h6l8 4q2 3-2 3h-5M17 25l13-1q2 2-1 3l-10 2H5M20 15v-3q-4-3-2-7 4-4 8 0 2 4-2 7v3zM21 17h3M22 1v-2M15 2l2 1M29 2l-2 1M14 8h2M28 8h2M16 13l1-1M28 13l-1-1" /></Svg></SideBtn>
            <SideBtn aria-label="Documents"><Svg $s={32} viewBox="0 0 32 32" fill="none" stroke="#000" strokeWidth="1.300"><path d="M7 1h14l7 7v20H7z M21 1v7h7M7 4H3v28h21v-4M10 6h4v3h-4z" /><path d="M17 11h8M10 14h15M10 17h15M10 20h15M10 24h15" /></Svg></SideBtn>
            <SideBtn aria-label="Settings"><Svg $s={32} viewBox="0 0 32 32" fill="#efefef" stroke="#000" strokeWidth="1.500"><path d={teeth(11, 21, 11, 9)} /><path fill="none" d="M12 16a5 5 0 1 0 4 7" /><path d={teeth(22, 10, 10, 9)} /><circle cx="22" cy="10" r="3" /></Svg></SideBtn>
            <SideBtn aria-label="Home page"><Svg $s={32} viewBox="0 0 32 32" fill="#000"><path d="M5 17L16 8l11 9v12h-8v-8h-6v8H5z" /><path fill="none" stroke="#000" strokeWidth="3" d="M1 17L16 4l15 13" /><path d="M23 3h5v10l-5-4z" /></Svg></SideBtn>
          </SideList>
        </Side>
      </Main>

      <Status><Hint>Select an edge to fillet</Hint><Cell $w={40}>2</Cell><Cell $w={38}>383</Cell></Status>

      <Scribble viewBox="0 570 450 270" aria-hidden>
        <path fill="none" stroke="#e5191b" strokeWidth="12" strokeLinecap="round" strokeLinejoin="round"
          d="M330 770Q312 806 285 811Q260 815 240 803Q170 800 110 765Q60 735 30 705Q5 675 12 640Q20 615 75 605Q110 596 160 600Q220 602 265 625Q300 645 345 668Q400 672 412 710Q425 745 422 778Q340 785 300 782Q270 778 257 770" />
      </Scribble>
    </Shell>
  );
}
